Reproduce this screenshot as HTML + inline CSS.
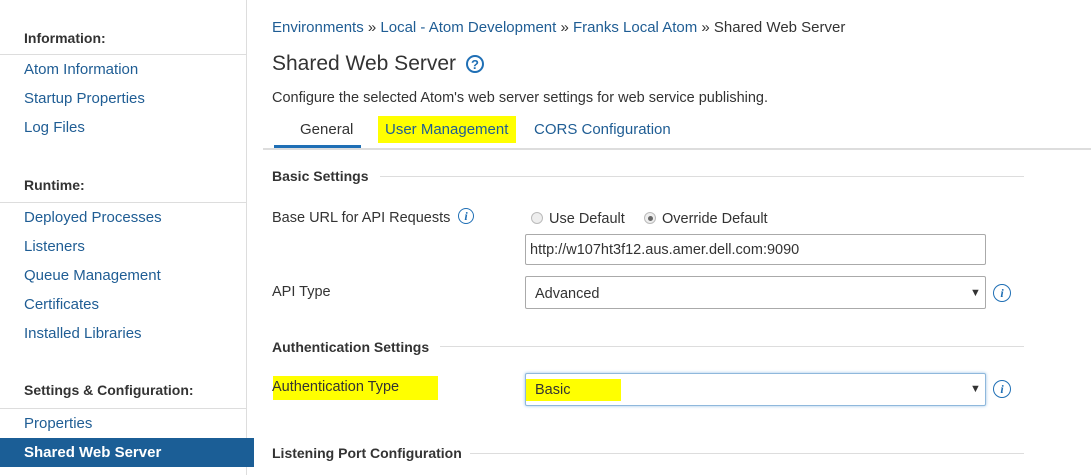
<!DOCTYPE html><html><head><style>
body{margin:0;width:1091px;height:475px;background:#fff;font-family:"Liberation Sans",sans-serif;position:relative;overflow:hidden;color:#333}
.a{position:absolute;white-space:nowrap}
.s{font-size:15px;color:#1f5d94;left:24px}
.h{font-size:14px;font-weight:bold;color:#333;left:24px}
.ln{position:absolute;height:1px;background:#ddd}
.lbl{font-size:15px;color:#333}
.sec{font-size:14px;font-weight:bold;color:#333;left:272px}
.box{position:absolute;border:1px solid #aaa;background:#fff;box-sizing:border-box;border-radius:2px}
.info{position:absolute;width:16px;height:16px;border:1.5px solid #1f6fb5;border-radius:50%;color:#1f6fb5;font:italic bold 12px "Liberation Serif",serif;text-align:center;line-height:14px;box-sizing:border-box}
.y{position:absolute;background:#ffff00}
</style></head><body>
<div style="position:absolute;left:246px;top:0;width:1px;height:475px;background:#ddd"></div>
<div class="a h" style="top:30px">Information:</div>
<div class="ln" style="left:0;width:246px;top:54px"></div>
<div class="a s" style="top:61px">Atom Information</div>
<div class="a s" style="top:90px">Startup Properties</div>
<div class="a s" style="top:119px">Log Files</div>
<div class="a h" style="top:177px">Runtime:</div>
<div class="ln" style="left:0;width:246px;top:202px"></div>
<div class="a s" style="top:209px">Deployed Processes</div>
<div class="a s" style="top:238px">Listeners</div>
<div class="a s" style="top:267px">Queue Management</div>
<div class="a s" style="top:296px">Certificates</div>
<div class="a s" style="top:325px">Installed Libraries</div>
<div class="a h" style="top:382px">Settings &amp; Configuration:</div>
<div class="ln" style="left:0;width:246px;top:408px"></div>
<div class="a s" style="top:415px">Properties</div>
<div style="position:absolute;left:0;top:438px;width:254px;height:29px;background:#1b5e96"></div>
<div class="a s" style="top:444px;color:#fff;font-weight:bold">Shared Web Server</div>

<div class="a" style="left:272px;top:19px;font-size:15px;color:#1f5d94">Environments <span style="color:#333">»</span> Local - Atom Development <span style="color:#333">»</span> Franks Local Atom <span style="color:#333">» Shared Web Server</span></div>
<div class="a" style="left:272px;top:52px;font-size:21px;color:#333">Shared Web Server</div>
<div class="a" style="left:466px;top:55px;width:18px;height:18px;border:2px solid #1f6fb5;border-radius:50%;box-sizing:border-box;color:#1f6fb5;font:bold 13px 'Liberation Sans';text-align:center;line-height:15px">?</div>
<div class="a lbl" style="left:272px;top:90px;font-size:14.5px">Configure the selected Atom's web server settings for web service publishing.</div>
<div class="y" style="left:378px;top:116px;width:138px;height:27px"></div>
<div class="a" style="left:300px;top:121px;font-size:15px;color:#333">General</div>
<div class="a" style="left:385px;top:121px;font-size:15px;color:#1f5d94">User Management</div>
<div class="a" style="left:534px;top:121px;font-size:15px;color:#1f5d94">CORS Configuration</div>
<div style="position:absolute;left:263px;top:148px;width:828px;height:2px;background:#ddd"></div>
<div style="position:absolute;left:274px;top:145px;width:87px;height:3px;background:#1f6fb5"></div>

<div class="a sec" style="top:168px">Basic Settings</div>
<div class="ln" style="left:380px;width:644px;top:176px"></div>
<div class="a lbl" style="left:272px;top:210px;font-size:14.5px">Base URL for API Requests</div>
<div class="info" style="left:458px;top:208px">i</div>
<div class="a" style="left:531px;top:212px;width:12px;height:12px;border:1px solid #bbb;border-radius:50%;background:#eee;box-sizing:border-box"></div>
<div class="a lbl" style="left:549px;top:211px;font-size:14.5px">Use Default</div>
<div class="a" style="left:644px;top:212px;width:12px;height:12px;border:1px solid #bbb;border-radius:50%;background:#eee;box-sizing:border-box"><div style="margin:2.5px;width:5px;height:5px;border-radius:50%;background:#666"></div></div>
<div class="a lbl" style="left:662px;top:211px;font-size:14.5px">Override Default</div>
<div class="box" style="left:525px;top:234px;width:461px;height:31px"></div>
<div class="a lbl" style="left:530px;top:242px;font-size:14.5px">http://w107ht3f12.aus.amer.dell.com:9090</div>
<div class="a lbl" style="left:272px;top:284px;font-size:14.5px">API Type</div>
<div class="box" style="left:525px;top:276px;width:461px;height:33px"></div>
<div class="a lbl" style="left:535px;top:286px;font-size:14.5px">Advanced</div>
<div class="a" style="left:970px;top:287px;font-size:11px;color:#333">▼</div>
<div class="info" style="left:993px;top:284px;width:18px;height:18px;line-height:16px">i</div>

<div class="a sec" style="top:339px">Authentication Settings</div>
<div class="ln" style="left:440px;width:584px;top:346px"></div>
<div class="y" style="left:273px;top:376px;width:165px;height:24px"></div>
<div class="a lbl" style="left:272px;top:379px;font-size:14.5px">Authentication Type</div>
<div class="box" style="left:525px;top:373px;width:461px;height:33px;border-color:#8fb8dc;box-shadow:0 0 3px #9cc3e6"></div>
<div class="y" style="left:526px;top:379px;width:95px;height:22px"></div>
<div class="a lbl" style="left:535px;top:382px;font-size:14.5px">Basic</div>
<div class="a" style="left:970px;top:383px;font-size:11px;color:#333">▼</div>
<div class="info" style="left:993px;top:380px;width:18px;height:18px;line-height:16px">i</div>

<div class="a sec" style="top:445px">Listening Port Configuration</div>
<div class="ln" style="left:470px;width:554px;top:453px"></div>
</body></html>
